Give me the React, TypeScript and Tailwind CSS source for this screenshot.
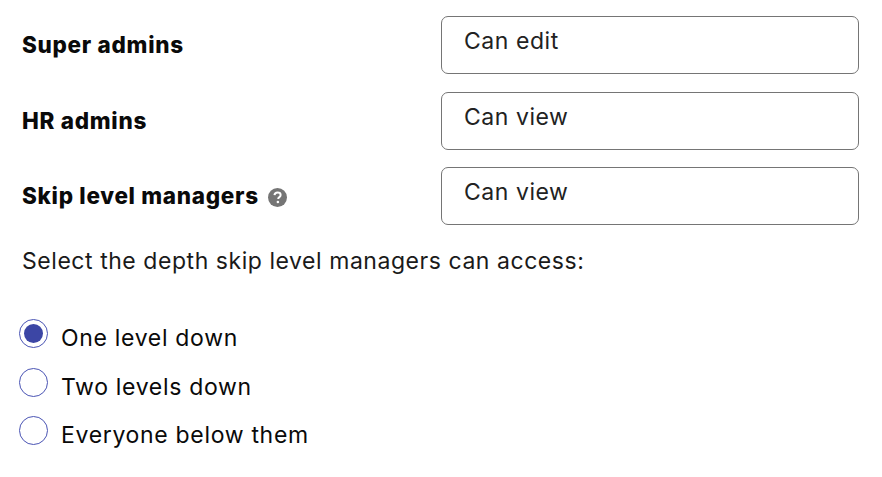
const roles = [
  { name: "Super admins", value: "Can edit" },
  { name: "HR admins", value: "Can view" },
  { name: "Skip level managers", value: "Can view", help: true },
];

const depths = ["One level down", "Two levels down", "Everyone below them"];

function HelpIcon() {
  return (
    <svg viewBox="0 0 20 20" className="w-[19px] h-[19px] ml-[9px] mt-[3px]">
      <circle cx="10" cy="10" r="10" fill="#757575" />
      <path d="M6.8 7.6c.2-1.8 1.5-2.8 3.3-2.8 1.9 0 3.2 1.1 3.2 2.6 0 1.2-.7 1.8-1.6 2.4-.7.5-.9.8-.9 1.5v.3" fill="none" stroke="#fff" strokeWidth="2.1" />
      <circle cx="10.4" cy="14.7" r="1.35" fill="#fff" />
    </svg>
  );
}

export default function App() {
  return (
    <div className="w-[882px] h-[477px] bg-white overflow-hidden font-['Inter',sans-serif] text-[23px] text-[#111] pl-[22px] pr-[23px] pt-[16px]">
      <div className="flex flex-col gap-[17.5px]">
        {roles.map((r) => (
          <div key={r.name} className="flex items-center justify-between h-[58px]">
            <div className="flex items-center font-extrabold text-[22.5px] tracking-[0.7px] text-[#0a0a0a]">
              {r.name}
              {r.help && <HelpIcon />}
            </div>
            <div className="w-[418px] h-[58px] border border-[#757575] rounded-[7px] pl-[22px] pt-[6px] leading-[36px] text-[#222] tracking-[0.55px]">
              {r.value}
            </div>
          </div>
        ))}
      </div>
      <p className="mt-[17px] leading-[38px] text-[#1a1a1a] tracking-[0.55px]">Select the depth skip level managers can access:</p>
      <div className="mt-[39px] -ml-[3px] flex flex-col gap-[19.6px]">
        {depths.map((d, i) => (
          <label key={d} className="flex items-start h-[29px]">
            <span className="w-[29px] h-[29px] rounded-full border border-[#4a54b4] flex items-center justify-center shrink-0">
              {i === 0 && <span className="w-[19px] h-[19px] rounded-full bg-[#3c46a5]" />}
            </span>
            <span className="ml-[13px] mt-[4px] leading-[30px] tracking-[0.68px] text-[#0a0a0a]">{d}</span>
          </label>
        ))}
      </div>
    </div>
  );
}
